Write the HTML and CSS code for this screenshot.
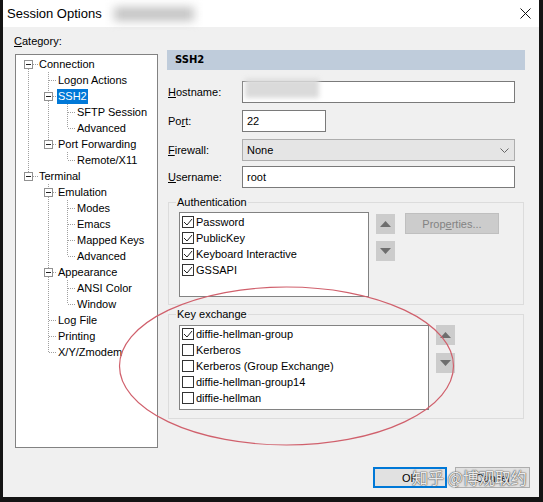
FILE: index.html
```html
<!DOCTYPE html>
<html>
<head>
<meta charset="utf-8">
<link rel="stylesheet" href="styles.css">
</head>
<body>
<div class="window">
  <div class="titlebar">
    <span class="title">Session Options</span>
    <span class="blur-title"></span>
    <svg class="close" width="11" height="11" viewBox="0 0 11 11"><path d="M0.5 0.5L10.5 10.5M10.5 0.5L0.5 10.5" stroke="#111" stroke-width="1" fill="none"/></svg>
  </div>
  <div class="main">
    <div class="left">
      <div class="cat-label"><u>C</u>ategory:</div>
      <div class="tree">
        <svg class="tree-lines" width="141" height="392" viewBox="16 55 141 392">
          <g stroke="#a0a0a0" stroke-width="1" stroke-dasharray="1 1" fill="none">
            <path d="M28.5 69V172"/>
            <path d="M48.5 72V92M48.5 101V140"/>
            <path d="M48.5 184V188M48.5 197V268M48.5 277V352"/>
            <path d="M67.5 104V128M67.5 152V160M67.5 200V256M67.5 280V304"/>
            <path d="M33 64.5H38M33 176.5H38"/>
            <path d="M53 96.5H57M53 144.5H57M53 192.5H57M53 272.5H57"/>
            <path d="M49 80.5H57M49 320.5H57M49 336.5H57M49 352.5H57"/>
            <path d="M68 112.5H76M68 128.5H76M68 160.5H76M68 208.5H76M68 224.5H76M68 240.5H76M68 256.5H76M68 288.5H76M68 304.5H76"/>
          </g>
          <g fill="#fff" stroke="#919191" stroke-width="1">
            <rect x="24.5" y="60.5" width="8" height="8"/>
            <rect x="24.5" y="172.5" width="8" height="8"/>
            <rect x="44.5" y="92.5" width="8" height="8"/>
            <rect x="44.5" y="140.5" width="8" height="8"/>
            <rect x="44.5" y="188.5" width="8" height="8"/>
            <rect x="44.5" y="268.5" width="8" height="8"/>
          </g>
          <g stroke="#222" stroke-width="1">
            <path d="M26 64.5H31M26 176.5H31M46 96.5H51M46 144.5H51M46 192.5H51M46 272.5H51"/>
          </g>
        </svg>
        <div class="row l0">Connection</div>
        <div class="row l1">Logon Actions</div>
        <div class="row l1"><span class="sel">SSH2</span></div>
        <div class="row l2">SFTP Session</div>
        <div class="row l2">Advanced</div>
        <div class="row l1">Port Forwarding</div>
        <div class="row l2">Remote/X11</div>
        <div class="row l0">Terminal</div>
        <div class="row l1">Emulation</div>
        <div class="row l2">Modes</div>
        <div class="row l2">Emacs</div>
        <div class="row l2">Mapped Keys</div>
        <div class="row l2">Advanced</div>
        <div class="row l1">Appearance</div>
        <div class="row l2">ANSI Color</div>
        <div class="row l2">Window</div>
        <div class="row l1">Log File</div>
        <div class="row l1">Printing</div>
        <div class="row l1">X/Y/Zmodem</div>
      </div>
    </div>
    <div class="right">
      <div class="header">SSH2</div>
      <div class="form-row r1">
        <span class="lbl"><u>H</u>ostname:</span>
        <div class="input wide host"><span class="blur-host"></span></div>
      </div>
      <div class="form-row r2">
        <span class="lbl">Po<u>r</u>t:</span>
        <div class="input port">22</div>
      </div>
      <div class="form-row r3">
        <span class="lbl"><u>F</u>irewall:</span>
        <div class="select wide"><span>None</span>
          <svg width="9" height="5" viewBox="0 0 9 5"><path d="M0.5 0.5L4.5 4.5L8.5 0.5" stroke="#666" fill="none"/></svg>
        </div>
      </div>
      <div class="form-row r4">
        <span class="lbl"><u>U</u>sername:</span>
        <div class="input wide">root</div>
      </div>
      <fieldset class="group auth">
        <legend>Authentication</legend>
        <div class="group-body">
          <div class="list auth-list">
            <div class="item"><span class="cb"><svg width="10" height="10" viewBox="0 0 10 10"><path d="M1 5L4 8L9 2" stroke="#222" fill="none"/></svg></span>Password</div>
            <div class="item"><span class="cb"><svg width="10" height="10" viewBox="0 0 10 10"><path d="M1 5L4 8L9 2" stroke="#222" fill="none"/></svg></span>PublicKey</div>
            <div class="item"><span class="cb"><svg width="10" height="10" viewBox="0 0 10 10"><path d="M1 5L4 8L9 2" stroke="#222" fill="none"/></svg></span>Keyboard Interactive</div>
            <div class="item"><span class="cb"><svg width="10" height="10" viewBox="0 0 10 10"><path d="M1 5L4 8L9 2" stroke="#222" fill="none"/></svg></span>GSSAPI</div>
          </div>
          <div class="arrows">
            <span class="arr"><svg width="11" height="6" viewBox="0 0 11 6"><path d="M0 6L5.5 0L11 6Z" fill="#6e6e6e"/></svg></span>
            <span class="arr"><svg width="11" height="6" viewBox="0 0 11 6"><path d="M0 0L5.5 6L11 0Z" fill="#6e6e6e"/></svg></span>
          </div>
          <div class="btn disabled props">Prop<u>e</u>rties...</div>
        </div>
      </fieldset>
      <fieldset class="group kex">
        <legend>Key exchange</legend>
        <div class="group-body">
          <div class="list kex-list">
            <div class="item"><span class="cb"><svg width="10" height="10" viewBox="0 0 10 10"><path d="M1 5L4 8L9 2" stroke="#222" fill="none"/></svg></span>diffie-hellman-group</div>
            <div class="item"><span class="cb"></span>Kerberos</div>
            <div class="item"><span class="cb"></span>Kerberos (Group Exchange)</div>
            <div class="item"><span class="cb"></span>diffie-hellman-group14</div>
            <div class="item"><span class="cb"></span>diffie-hellman</div>
          </div>
          <div class="arrows kex-arrows">
            <span class="arr"><svg width="11" height="6" viewBox="0 0 11 6"><path d="M0 6L5.5 0L11 6Z" fill="#6e6e6e"/></svg></span>
            <span class="arr"><svg width="11" height="6" viewBox="0 0 11 6"><path d="M0 0L5.5 6L11 0Z" fill="#6e6e6e"/></svg></span>
          </div>
        </div>
      </fieldset>
    </div>
  </div>
  <div class="buttons">
    <div class="btn ok">OK</div>
    <div class="btn cancel">Cancel</div>
  </div>
  <div class="watermark">知乎 @博观取约</div>
  <svg class="ellipse" width="536" height="497" viewBox="3 0 536 497">
    <ellipse cx="286.5" cy="366" rx="167" ry="79" fill="none" stroke="#d0606c" stroke-width="1.2"/>
  </svg>
</div>
</body>
</html>
```
FILE: styles.css
```css
html, body {
  margin: 0;
  padding: 0;
}
body {
  background: #141414;
  width: 543px;
  height: 502px;
  overflow: hidden;
  font-family: "Liberation Sans", Arial, sans-serif;
  font-size: 11px;
  color: #000;
}
.window {
  position: relative;
  margin-left: 3px;
  width: 536px;
  height: 497px;
  background: #f0f0f0;
  display: flex;
  flex-direction: column;
}
.titlebar {
  flex: none;
  height: 27px;
  background: #fff;
  display: flex;
  align-items: center;
  padding-left: 4px;
}
.title {
  font-size: 13px;
  color: #000;
}
.blur-title {
  width: 80px;
  height: 14px;
  margin-left: 12px;
  background: #c4c4c4;
  filter: blur(5px);
}
.close {
  margin-left: auto;
  margin-right: 8px;
}
.main {
  display: flex;
  padding: 7px 0 0 12px;
}
.left {
  width: 143px;
  flex: none;
}
.cat-label {
  height: 20px;
  line-height: 14px;
  margin-left: -1px;
}
.tree {
  position: relative;
  box-sizing: border-box;
  height: 394px;
  border: 1px solid #828282;
  background: #fff;
  padding-top: 1px;
}
.tree-lines {
  position: absolute;
  left: 0;
  top: 0;
  pointer-events: none;
}
.row {
  height: 16px;
  display: flex;
  align-items: center;
  white-space: nowrap;
}
.l0 { padding-left: 23px; }
.l1 { padding-left: 42px; }
.l2 { padding-left: 61px; }
.sel {
  background: #0078d7;
  color: #fff;
  height: 15px;
  line-height: 15px;
  padding: 0 1px;
  margin-left: -1px;
}
.right {
  margin-left: 9px;
  width: 358px;
  padding-top: 16px;
}
.header {
  height: 20px;
  line-height: 20px;
  background: #bfccdb;
  padding-left: 8px;
  font-family: "DejaVu Sans", Verdana, sans-serif;
  font-weight: bold;
  font-size: 10px;
}
.form-row {
  display: flex;
  align-items: center;
  height: 22px;
  margin-top: 6px;
}
.r1 { margin-top: 11px; }
.r2 { margin-top: 7px; }
.r3 { margin-top: 7px; }
.r4 { margin-top: 5px; }
.lbl {
  width: 75px;
  flex: none;
  padding-left: 1px;
  box-sizing: border-box;
}
.input {
  position: relative;
  box-sizing: border-box;
  height: 22px;
  border: 1px solid #7a7a7a;
  background: #fff;
  line-height: 20px;
  padding-left: 4px;
}
.wide { width: 273px; }
.port { width: 84px; }
.blur-host {
  position: absolute;
  left: 2px;
  top: -3px;
  width: 74px;
  height: 19px;
  background: #dadada;
  filter: blur(2.5px);
}
.select {
  box-sizing: border-box;
  height: 22px;
  border: 1px solid #adadad;
  background: #e5e5e5;
  display: flex;
  align-items: center;
  justify-content: space-between;
  padding: 0 5px 0 4px;
}
.group {
  box-sizing: border-box;
  width: 356px;
  margin: 7px 0 0 1px;
  border: 1px solid #dcdcdc;
  padding: 3px 9px 7px 10px;
  min-width: 0;
}
.group legend {
  padding: 0 1px;
  margin-left: -3px;
  line-height: 14px;
  color: #000;
}
.kex {
  margin-top: 2px;
  padding-top: 4px;
  padding-bottom: 8px;
}
.group-body {
  display: flex;
  align-items: flex-start;
}
.list {
  box-sizing: border-box;
  height: 85px;
  background: #fff;
  border: 1px solid #828282;
  padding: 1px 0 0 2px;
}
.auth-list { width: 190px; }
.kex-list { width: 250px; padding-top: 0; }
.item {
  display: flex;
  align-items: center;
  height: 16px;
  white-space: nowrap;
}
.cb {
  box-sizing: border-box;
  width: 12px;
  height: 12px;
  border: 1px solid #333;
  background: #fff;
  margin-right: 2px;
  display: flex;
  align-items: center;
  justify-content: center;
}
.arrows {
  margin-left: 7px;
  margin-top: 2px;
  display: flex;
  flex-direction: column;
  gap: 7px;
}
.kex-arrows {
  margin-top: 0;
  gap: 8px;
}
.arr {
  width: 19px;
  height: 20px;
  background: #cccccc;
  display: flex;
  align-items: center;
  justify-content: center;
}
.btn {
  box-sizing: border-box;
  height: 21px;
  border: 1px solid #adadad;
  background: #e1e1e1;
  display: flex;
  align-items: center;
  justify-content: center;
}
.disabled {
  background: #cccccc;
  border-color: #bfbfbf;
  color: #838383;
}
.props {
  width: 94px;
  margin-left: 10px;
  margin-top: 1px;
}
.buttons {
  margin-top: auto;
  margin-bottom: 9px;
  padding-right: 9px;
  display: flex;
  justify-content: flex-end;
  gap: 8px;
}
.ok {
  width: 74px;
  border: 2px solid #0078d7;
}
.cancel {
  width: 75px;
}
.watermark {
  position: absolute;
  left: 409px;
  top: 466px;
  font-family: "Noto Sans CJK SC", "Liberation Sans", sans-serif;
  font-size: 16px;
  line-height: 22px;
  color: rgba(255, 255, 255, 0.9);
  text-shadow: 0 0 1px #555, 0 0 1px #555, 0 0 2px #888;
  white-space: nowrap;
}
.ellipse {
  position: absolute;
  left: 0;
  top: 0;
  pointer-events: none;
}
```
